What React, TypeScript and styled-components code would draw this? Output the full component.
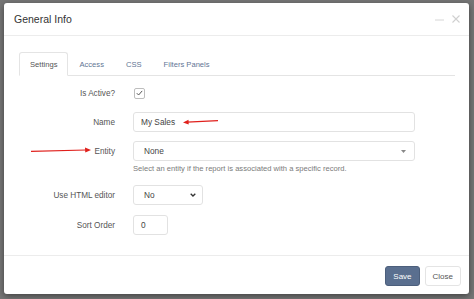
import React from 'react';
import styled, { createGlobalStyle } from 'styled-components';

const GlobalStyle = createGlobalStyle`
  html, body {
    margin: 0;
    padding: 0;
    background: #767676;
    overflow: hidden;
  }
  body {
    font-family: "Liberation Sans", Arial, sans-serif;
  }
`;

const Backdrop = styled.div`
  width: 474px;
  height: 299px;
  padding: 3px 5px 5px 4px;
  box-sizing: border-box;
  display: flex;
`;

const Modal = styled.div`
  flex: 1;
  background: #fff;
  border-radius: 3px;
  box-shadow: 0 2px 6px rgba(0, 0, 0, 0.45);
  display: flex;
  flex-direction: column;
`;

const Header = styled.div`
  height: 33px;
  box-sizing: border-box;
  border-bottom: 1px solid #ececec;
  padding: 0 9px 0 10px;
  display: flex;
  align-items: center;
  justify-content: space-between;
`;

const Title = styled.h4`
  margin: 0;
  font-size: 10.5px;
  font-weight: normal;
  color: #333;
`;

const HeaderTools = styled.div`
  display: flex;
  align-items: center;
  gap: 8px;
`;

const Body = styled.div`
  flex: 1;
  padding: 16px 14px 0 15px;
  border-bottom: 1px solid #ececec;
`;

const TabList = styled.div`
  display: flex;
  border-bottom: 1px solid #e4e4e4;
  height: 23px;
`;

const Tab = styled.div<{ $active?: boolean }>`
  padding: 0 10px;
  height: 24px;
  box-sizing: border-box;
  display: flex;
  align-items: center;
  font-size: 7.6px;
  color: ${(p) => (p.$active ? '#555' : '#5f7594')};
  background: ${(p) => (p.$active ? '#fff' : 'transparent')};
  border: 1px solid ${(p) => (p.$active ? '#e4e4e4' : 'transparent')};
  border-bottom-color: ${(p) => (p.$active ? '#fff' : 'transparent')};
  border-radius: 3px 3px 0 0;
`;

const Form = styled.div`
  display: flex;
  flex-direction: column;
  padding-top: 7px;
`;

const Row = styled.div<{ $gap?: number }>`
  display: grid;
  grid-template-columns: 96px 1fr;
  column-gap: 18px;
  align-items: start;
  margin-bottom: ${(p) => p.$gap ?? 9}px;
`;

const Label = styled.div`
  position: relative;
  height: 20px;
  display: flex;
  align-items: center;
  justify-content: flex-end;
  font-size: 8.2px;
  color: #555;
`;

const Field = styled.div`
  display: flex;
  flex-direction: column;
  align-items: flex-start;
`;

const CheckHolder = styled.div`
  height: 20px;
  display: flex;
  align-items: center;
  padding-left: 1px;
`;

const CheckBox = styled.span`
  width: 9px;
  height: 9px;
  border: 1px solid #bdbdbd;
  border-radius: 2px;
  background: #fff;
  display: flex;
  align-items: center;
  justify-content: center;
`;

const Box = styled.div<{ $w: number; $pl?: number }>`
  position: relative;
  width: ${(p) => p.$w}px;
  height: 20px;
  box-sizing: border-box;
  border: 1px solid #e2e2e2;
  border-radius: 3px;
  background: #fff;
  display: flex;
  align-items: center;
  justify-content: space-between;
  padding: 0 6px 0 ${(p) => p.$pl ?? 7}px;
  font-size: 8.3px;
  color: #444;
`;

const Help = styled.div`
  font-size: 7.6px;
  color: #7a7a7a;
  margin-top: 3px;
  margin-bottom: 12px;
`;

const Arrow = styled.svg`
  position: absolute;
  overflow: visible;
`;

const Footer = styled.div`
  display: flex;
  justify-content: flex-end;
  gap: 5px;
  padding: 10px 8px 8px 0;
`;

const Button = styled.button<{ $primary?: boolean }>`
  height: 20px;
  padding: 0 7px;
  font-family: "Liberation Sans", Arial, sans-serif;
  font-size: 8px;
  border-radius: 3px;
  color: ${(p) => (p.$primary ? '#fff' : '#555')};
  background: ${(p) => (p.$primary ? '#5a6f8f' : '#fff')};
  border: 1px solid ${(p) => (p.$primary ? '#4c5f7c' : '#e4e4e4')};
`;

export default function App() {
  return (
    <>
      <GlobalStyle />
      <Backdrop>
        <Modal>
          <Header>
            <Title>General Info</Title>
            <HeaderTools>
              <svg width="9" height="9" viewBox="0 0 9 9">
                <path d="M0 5h9" stroke="#d6d6d6" strokeWidth="1" />
              </svg>
              <svg width="8" height="8" viewBox="0 0 8 8">
                <path d="M0.5 0.5l7 7M7.5 0.5l-7 7" stroke="#d0d0d0" strokeWidth="1.1" />
              </svg>
            </HeaderTools>
          </Header>
          <Body>
            <TabList>
              <Tab $active>Settings</Tab>
              <Tab>Access</Tab>
              <Tab>CSS</Tab>
              <Tab>Filters Panels</Tab>
            </TabList>
            <Form>
              <Row>
                <Label>Is Active?</Label>
                <CheckHolder>
                  <CheckBox>
                    <svg width="7" height="6" viewBox="0 0 7 6">
                      <path d="M0.8 3.2l1.8 1.8L6.2 0.9" fill="none" stroke="#555" strokeWidth="1" />
                    </svg>
                  </CheckBox>
                </CheckHolder>
              </Row>
              <Row>
                <Label>Name</Label>
                <Field>
                  <Box $w={282}>
                    My Sales
                    <Arrow width="36" height="6" style={{ left: 49, top: 6 }}>
                      <path d="M4 3.2L35 1.6" stroke="#e0201c" strokeWidth="1.2" />
                      <path d="M0 3.4L5.5 0.8L5.7 5.6Z" fill="#e0201c" />
                    </Arrow>
                  </Box>
                </Field>
              </Row>
              <Row $gap={0}>
                <Label>
                  Entity
                  <Arrow width="60" height="6" style={{ right: 24, top: 6 }}>
                    <path d="M0 4.4L55 3" stroke="#e0201c" strokeWidth="1.2" />
                    <path d="M60 2.9L54 0.5L54.3 5.4Z" fill="#e0201c" />
                  </Arrow>
                </Label>
                <Field>
                  <Box $w={282} $pl={10}>
                    None
                    <svg width="5" height="3" viewBox="0 0 5 3" style={{ marginRight: 2 }}>
                      <path d="M0 0h5L2.5 3z" fill="#888" />
                    </svg>
                  </Box>
                  <Help>Select an entity if the report is associated with a specific record.</Help>
                </Field>
              </Row>
              <Row $gap={10}>
                <Label>Use HTML editor</Label>
                <Field>
                  <Box $w={70} $pl={10}>
                    No
                    <svg width="6" height="4" viewBox="0 0 6 4">
                      <path d="M0.7 0.7L3 3L5.3 0.7" fill="none" stroke="#333" strokeWidth="1.3" />
                    </svg>
                  </Box>
                </Field>
              </Row>
              <Row $gap={0}>
                <Label>Sort Order</Label>
                <Field>
                  <Box $w={35}>0</Box>
                </Field>
              </Row>
            </Form>
          </Body>
          <Footer>
            <Button $primary>Save</Button>
            <Button>Close</Button>
          </Footer>
        </Modal>
      </Backdrop>
    </>
  );
}
